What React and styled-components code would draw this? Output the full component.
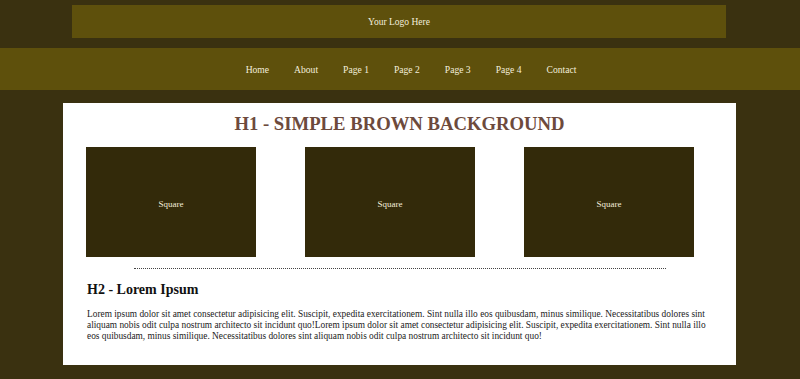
import React from "react";
import styled, { createGlobalStyle } from "styled-components";

const GlobalStyle = createGlobalStyle`
  body {
    margin: 0;
    background: #3a3110;
    font-family: "Liberation Serif", "Times New Roman", serif;
  }
`;

const Page = styled.div`
  width: 800px;
  height: 379px;
  overflow: hidden;
  padding-top: 5px;
  box-sizing: border-box;
`;

const LogoBar = styled.header`
  width: 654px;
  height: 33px;
  margin-left: 72px;
  background: #5e500c;
  color: #f3eedc;
  font-size: 9.5px;
  display: flex;
  align-items: center;
  justify-content: center;
`;

const NavBar = styled.nav`
  margin-top: 10px;
  height: 42px;
  background: #5e500c;
  display: flex;
  align-items: center;
  justify-content: center;
  padding-left: 22px;
`;

const NavLink = styled.a`
  color: #f3eedc;
  font-size: 9.6px;
  padding: 0 12.5px;
  text-decoration: none;
`;

const Main = styled.main`
  margin: 13px 0 0 63px;
  width: 673px;
  height: 262px;
  background: #ffffff;
  box-sizing: border-box;
  padding-top: 9px;
`;

const Title = styled.h1`
  margin: 0;
  text-align: center;
  color: #6d4a3c;
  font-size: 18.7px;
  line-height: 24px;
  font-weight: bold;
  text-transform: uppercase;
`;

const SquareRow = styled.div`
  display: flex;
  gap: 49px;
  padding-left: 23px;
  margin-top: 11px;
`;

const Square = styled.div`
  width: 170px;
  height: 110px;
  box-sizing: border-box;
  padding-top: 4px;
  background: #332a0a;
  color: #f3eedc;
  font-size: 9px;
  display: flex;
  align-items: center;
  justify-content: center;
`;

const Divider = styled.hr`
  width: 532px;
  margin: 11px auto 0;
  border: none;
  border-top: 1px dotted #444;
`;

const Section = styled.section`
  padding: 0 24px;
`;

const SubTitle = styled.h2`
  margin: 12px 0 0;
  font-size: 14px;
  line-height: 18px;
  color: #111;
`;

const Text = styled.p`
  margin: 10px 0 0;
  font-size: 9.35px;
  line-height: 11px;
  color: #222;
`;

const links = ["Home", "About", "Page 1", "Page 2", "Page 3", "Page 4", "Contact"];

const lorem =
  "Lorem ipsum dolor sit amet consectetur adipisicing elit. Suscipit, expedita exercitationem. Sint nulla illo eos quibusdam, minus similique. Necessitatibus dolores sint aliquam nobis odit culpa nostrum architecto sit incidunt quo!";

export default function App() {
  return (
    <>
      <GlobalStyle />
      <Page>
        <LogoBar>Your Logo Here</LogoBar>
        <NavBar>
          {links.map((l) => (
            <NavLink key={l} href="#">
              {l}
            </NavLink>
          ))}
        </NavBar>
        <Main>
          <Title>H1 - Simple Brown Background</Title>
          <SquareRow>
            <Square>Square</Square>
            <Square>Square</Square>
            <Square>Square</Square>
          </SquareRow>
          <Divider />
          <Section>
            <SubTitle>H2 - Lorem Ipsum</SubTitle>
            <Text>
              {lorem}
              {lorem}
            </Text>
          </Section>
        </Main>
      </Page>
    </>
  );
}
